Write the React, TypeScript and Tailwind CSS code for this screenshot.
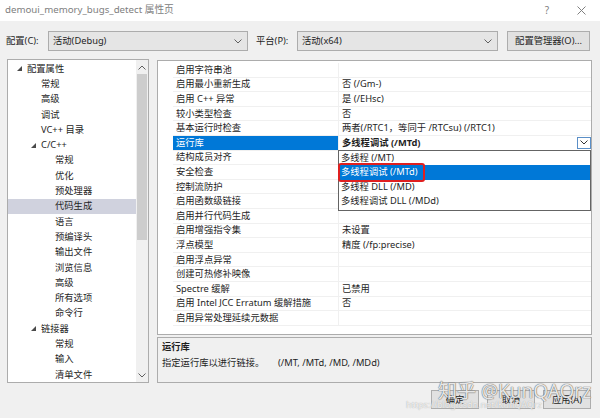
import React from 'react';

type TreeItem = { t: string; lvl: 0 | 1 | 2; exp?: boolean; sel?: boolean };

const tree: TreeItem[] = [
  { t: '配置属性', lvl: 0, exp: true },
  { t: '常规', lvl: 1 },
  { t: '高级', lvl: 1 },
  { t: '调试', lvl: 1 },
  { t: 'VC++ 目录', lvl: 1 },
  { t: 'C/C++', lvl: 1, exp: true },
  { t: '常规', lvl: 2 },
  { t: '优化', lvl: 2 },
  { t: '预处理器', lvl: 2 },
  { t: '代码生成', lvl: 2, sel: true },
  { t: '语言', lvl: 2 },
  { t: '预编译头', lvl: 2 },
  { t: '输出文件', lvl: 2 },
  { t: '浏览信息', lvl: 2 },
  { t: '高级', lvl: 2 },
  { t: '所有选项', lvl: 2 },
  { t: '命令行', lvl: 2 },
  { t: '链接器', lvl: 1, exp: true },
  { t: '常规', lvl: 2 },
  { t: '输入', lvl: 2 },
  { t: '清单文件', lvl: 2 },
];

const indent = ['pl-[9px]', 'pl-[23px]', 'pl-[37px]'];

const rows: { name: string; value?: string }[] = [
  { name: '启用字符串池' },
  { name: '启用最小重新生成', value: '否 (/Gm-)' },
  { name: '启用 C++ 异常', value: '是 (/EHsc)' },
  { name: '较小类型检查', value: '否' },
  { name: '基本运行时检查', value: '两者(/RTC1，等同于 /RTCsu) (/RTC1)' },
  { name: '运行库', value: '多线程调试 (/MTd)' },
  { name: '结构成员对齐' },
  { name: '安全检查' },
  { name: '控制流防护' },
  { name: '启用函数级链接' },
  { name: '启用并行代码生成' },
  { name: '启用增强指令集', value: '未设置' },
  { name: '浮点模型', value: '精度 (/fp:precise)' },
  { name: '启用浮点异常' },
  { name: '创建可热修补映像' },
  { name: 'Spectre 缓解', value: '已禁用' },
  { name: '启用 Intel JCC Erratum 缓解措施', value: '否' },
  { name: '启用异常处理延续元数据' },
];

const options = ['多线程 (/MT)', '多线程调试 (/MTd)', '多线程 DLL (/MD)', '多线程调试 DLL (/MDd)'];

function Chevron({ up = false, color = '#606060' }: { up?: boolean; color?: string }) {
  return (
    <svg width="8" height="5" viewBox="0 0 8 5">
      <path d={up ? 'M0.5 4.5 L4 1 L7.5 4.5' : 'M0.5 0.5 L4 4 L7.5 0.5'} fill="none" stroke={color} strokeWidth="1" />
    </svg>
  );
}

function Combo({ text, className }: { text: string; className: string }) {
  return (
    <div className={`h-[20px] bg-[#e5e5e5] border border-[#acacac] flex items-center pl-[4px] pr-[5px] ${className}`}>
      <span>{text}</span>
      <span className="ml-auto">
        <Chevron />
      </span>
    </div>
  );
}

export default function App() {
  return (
    <div className="relative w-[600px] h-[418px] overflow-hidden bg-[#f0f0f0] text-[#1e1e1e] text-[9.3px] font-['Noto_Sans','Noto_Sans_CJK_SC',sans-serif]">
      {/* Title bar */}
      <div className="h-[21px] bg-white flex items-center pl-[5px] text-[#808080] text-[9.7px]">
        <span>demoui_memory_bugs_detect 属性页</span>
        <span className="ml-auto mr-[28px] text-[10px]">?</span>
        <span className="mr-[14px]">
          <svg width="9" height="9" viewBox="0 0 9 9">
            <path d="M0.5 0.5 L8.5 8.5 M8.5 0.5 L0.5 8.5" stroke="#808080" strokeWidth="1" />
          </svg>
        </span>
      </div>

      {/* Configuration row */}
      <div className="flex items-center mt-[10px] pl-[6px]">
        <span className="w-[42px]">配置(C):</span>
        <Combo text="活动(Debug)" className="w-[200px]" />
        <span className="ml-[8px] w-[41px]">平台(P):</span>
        <Combo text="活动(x64)" className="w-[201px]" />
        <button className="ml-[9px] w-[83px] h-[20px] bg-[#e1e1e1] border border-[#adadad]">配置管理器(O)...</button>
      </div>

      {/* Main area */}
      <div className="flex mt-[8px] pl-[7px]">
        {/* Tree */}
        <div className="w-[142px] h-[324px] bg-white border border-[#acacac] flex overflow-hidden">
          <div className="flex-1 pt-[1px] overflow-hidden">
            {tree.map((item, i) => (
              <div
                key={i}
                className={`h-[15.3px] flex items-center ${indent[item.lvl]} ${item.sel ? 'bg-[#d0d2de]' : ''}`}
              >
                <span className="w-[10px] flex items-center">
                  {item.exp && (
                    <svg width="5" height="5" viewBox="0 0 5 5">
                      <polygon points="5,0 5,5 0,5" fill="#4a4a4a" />
                    </svg>
                  )}
                </span>
                <span className="whitespace-nowrap">{item.t}</span>
              </div>
            ))}
          </div>
          <div className="w-[12px] bg-[#f0f0f0] flex flex-col">
            <div className="h-[14px] flex items-center justify-center">
              <Chevron up />
            </div>
            <div className="h-[166px] mx-[1px] bg-[#cdcdcd]" />
            <div className="flex-1" />
            <div className="h-[14px] flex items-center justify-center">
              <Chevron />
            </div>
          </div>
        </div>

        {/* Right column */}
        <div className="ml-[8px] w-[435px] mt-[1px] flex flex-col">
          {/* Property grid */}
          <div className="h-[275px] bg-white border border-[#acacac] pt-[2px]">
            {rows.map((r, i) => {
              const sel = i === 5;
              return (
                <div key={i} className="h-[14.6px] flex">
                  <div className="w-[15px]" />
                  <div
                    className={`w-[165px] pl-[3px] flex items-center whitespace-nowrap border-b border-[#f0f0f0] ${
                      sel ? 'bg-[#0078d7] text-white border-[#0078d7]' : ''
                    }`}
                  >
                    {r.name}
                  </div>
                  <div
                    className={`relative flex-1 pl-[3px] flex items-center whitespace-nowrap border-b border-l border-[#f0f0f0] ${
                      sel ? 'font-bold' : ''
                    }`}
                  >
                    {r.value}
                    {sel && (
                      <>
                        <div className="absolute right-0 top-[1px] w-[14px] h-[12px] border border-[#5b8fc7] bg-white flex items-center justify-center">
                          <Chevron color="#333" />
                        </div>
                        <div className="absolute z-10 top-full left-[-1px] right-0 bg-white border border-[#646464] pb-[1px] font-normal">
                          {options.map((o, j) => (
                            <div
                              key={j}
                              className={`h-[14.5px] pl-[2px] flex items-center ${
                                j === 1 ? 'bg-[#0078d7] text-white' : ''
                              }`}
                            >
                              {o}
                            </div>
                          ))}
                          <div className="absolute left-[-1px] top-[12px] w-[87px] h-[19px] border-2 border-[#e02020] rounded-[3px]" />
                        </div>
                      </>
                    )}
                  </div>
                </div>
              );
            })}
          </div>

          {/* Description */}
          <div className="mt-[2px] h-[46px] border border-[#acacac] bg-[#f0f0f0] pl-[4px] pt-[1px] leading-[15.5px]">
            <div className="font-bold">运行库</div>
            <div>
              <span className="inline-block w-[116px]">指定运行库以进行链接。</span>
              <span>(/MT, /MTd, /MD, /MDd)</span>
            </div>
          </div>
        </div>
      </div>

      {/* Buttons */}
      <div className="flex justify-end gap-[8px] pr-[9px] mt-[7px]">
        <button className="w-[48px] h-[19px] bg-[#e1e1e1] border border-[#adadad]">确定</button>
        <button className="w-[48px] h-[19px] bg-[#e1e1e1] border border-[#adadad]">取消</button>
        <button className="w-[48px] h-[19px] bg-[#e1e1e1] border border-[#adadad]">应用(A)</button>
      </div>

      {/* Watermark */}
      <div className="absolute left-[438px] top-[380px] text-[19px] leading-[22px] text-white/85 [text-shadow:0_0_1px_#5a5a5a,0_0_1px_#5a5a5a] whitespace-nowrap pointer-events-none">
        知乎 @KunQAQrz
      </div>
      <div className="absolute left-[406px] top-[398px] text-[9px] text-white/80 [text-shadow:0_0_1px_#909090] whitespace-nowrap pointer-events-none">
        https://blog.csdn.net/KunQAQrz
      </div>
    </div>
  );
}
